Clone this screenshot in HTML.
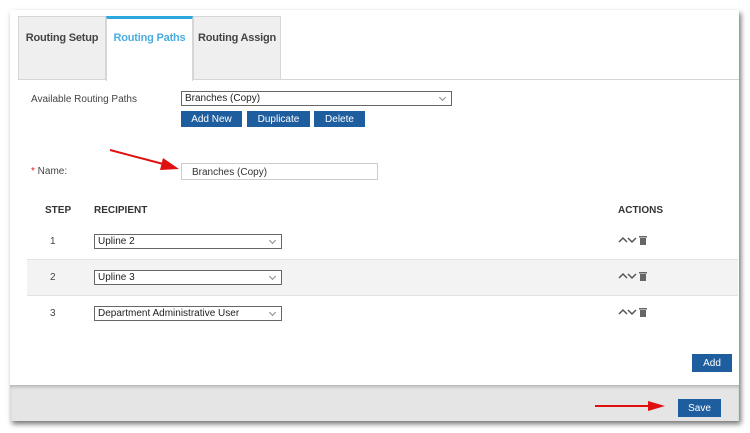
<!DOCTYPE html><html><head><style>
*{box-sizing:border-box;margin:0;padding:0}
body{width:750px;height:433px;background:#fff;font-family:"Liberation Sans",sans-serif;position:relative;overflow:hidden;color:#333}
.a{position:absolute}
.panel{left:10px;top:10px;width:729px;height:411px;background:#fff;box-shadow:2px 3px 5px rgba(0,0,0,.55)}
.foot{left:10px;top:385px;width:729px;height:36px;background:#e5e5e5;box-shadow:inset 0 3px 4px -2px rgba(0,0,0,.3)}
.tab{top:16px;height:64px;background:#efefef;border:1px solid #d6d6d6;font-weight:bold;font-size:11px;color:#444;padding-top:15px;text-align:center;letter-spacing:-.2px}
.btn{background:#1f5e9e;color:#fff;font-size:10px;text-align:center;height:16px;line-height:17px}
.sel{background:#fff;border:1px solid #666;font-size:10px;padding-left:3px;line-height:14px;color:#222}
.sel:after{content:"";position:absolute;right:6px;top:3px;width:4px;height:4px;border-right:1px solid #888;border-bottom:1px solid #888;transform:rotate(45deg)}
.t{font-size:10px;color:#444}
.h{font-size:10px;font-weight:bold;color:#333}
</style></head><body>
<div class="a panel"></div>
<div class="a foot"></div>
<div class="a" style="left:18px;top:79px;width:721px;border-top:1px solid #d6d6d6"></div>
<div class="a tab" style="left:18px;width:88px">Routing Setup</div>
<div class="a tab" style="left:106px;width:87px;background:#fff;border-color:#d6d6d6;border-top:3px solid #2aa7df;border-bottom:none;color:#4aaee0;padding-top:13px;height:65px">Routing Paths</div>
<div class="a tab" style="left:193px;width:88px">Routing Assign</div>
<div class="a t" style="left:31px;top:94px">Available Routing Paths</div>
<div class="a sel" style="left:181px;top:91px;width:271px;height:15px">Branches (Copy)</div>
<div class="a btn" style="left:181px;top:111px;width:61px">Add New</div>
<div class="a btn" style="left:247px;top:111px;width:63px">Duplicate</div>
<div class="a btn" style="left:314px;top:111px;width:51px">Delete</div>
<div class="a t" style="left:31px;top:166px"><span style="color:#d22">*</span> Name:</div>
<div class="a t" style="left:181px;top:163px;width:197px;height:17px;border:1px solid #ccc;padding:3px 0 0 10px;color:#333">Branches (Copy)</div>
<svg class="a" style="left:105px;top:145px" width="80" height="30"><line x1="5" y1="5" x2="62" y2="20" stroke="#e01010" stroke-width="2"/><polygon points="74,24 58,13 55,25" fill="#e01010"/></svg>
<svg class="a" style="left:590px;top:398px" width="80" height="16"><line x1="5" y1="8" x2="60" y2="8" stroke="#e01010" stroke-width="2"/><polygon points="75,8 58,3 58,13" fill="#e01010"/></svg>
<div class="a h" style="left:45px;top:205px">STEP</div>
<div class="a h" style="left:94px;top:205px">RECIPIENT</div>
<div class="a h" style="left:618px;top:205px">ACTIONS</div>
<div class="a" style="left:27px;top:259px;width:711px;height:37px;background:#f3f3f3;border-top:1px solid #e2e2e2;border-bottom:1px solid #e2e2e2"></div>
<div class="a t" style="left:50px;top:236px">1</div>
<div class="a t" style="left:50px;top:272px">2</div>
<div class="a t" style="left:50px;top:308px">3</div>
<div class="a sel" style="left:94px;top:234px;width:188px;height:15px">Upline 2</div>
<div class="a sel" style="left:94px;top:270px;width:188px;height:15px">Upline 3</div>
<div class="a sel" style="left:94px;top:306px;width:188px;height:15px">Department Administrative User</div>
<svg class="a" style="left:618px;top:234px" width="34" height="90">
<g fill="none" stroke="#555" stroke-width="1.5"><path d="M1 8l4-4 4 4M10 4l4 4 4-4"/><path d="M1 44l4-4 4 4M10 40l4 4 4-4"/><path d="M1 80l4-4 4 4M10 76l4 4 4-4"/></g>
<g fill="#666"><rect x="21" y="2" width="8" height="1.5"/><rect x="22" y="4" width="6" height="7"/><rect x="21" y="38" width="8" height="1.5"/><rect x="22" y="40" width="6" height="7"/><rect x="21" y="74" width="8" height="1.5"/><rect x="22" y="76" width="6" height="7"/></g></svg>
<div class="a btn" style="left:692px;top:354px;width:40px;height:18px;line-height:19px">Add</div>
<div class="a btn" style="left:678px;top:399px;width:43px;height:18px;line-height:19px">Save</div>
</body></html>
